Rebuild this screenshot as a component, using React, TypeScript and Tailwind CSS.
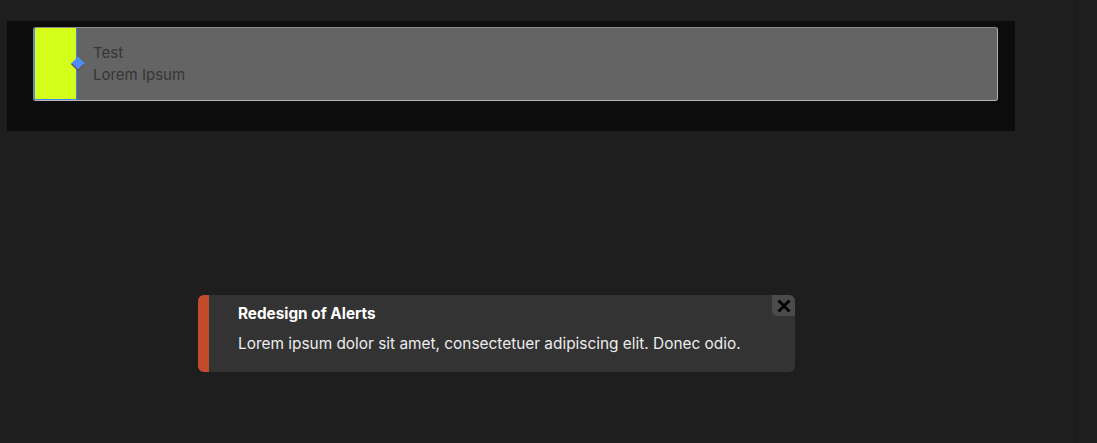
import React from "react";

export default function App() {
  return (
    <div
      className="w-[1097px] h-[443px] bg-[#1f1e1f] flex flex-col overflow-hidden relative"
      style={{ fontFamily: "Inter, 'Noto Sans', sans-serif" }}
    >
      <div className="absolute top-0 bottom-0 left-[1076px] w-px bg-[#1a191a]" />
      <div className="ml-[7px] mt-[21px] w-[1008px] h-[110px] bg-[#0c0c0c] pt-[6px] pl-[26px]">
        <div className="w-[965px] h-[74px] flex rounded-[3px] border border-[#8a8a8a] border-r-[#b0b0b0] border-b-[#b4b4b4] bg-[#646464] relative">
          <div className="w-[43px] h-full bg-[#d4ff1a] border-l border-b border-[#3f8cf0] rounded-l-[2px] border-r border-r-[#3b7fd8] relative">
            <div className="absolute right-[-6.5px] top-[30.5px] w-[10px] h-[10px] rotate-45 bg-[#4b8dff] border border-[#6a4a1a] border-l-[#4b8dff] border-t-[#4b8dff]" />
          </div>
          <div className="flex flex-col pl-[16px] pt-[14px] text-[#363636] text-[15px] leading-[22px]">
            <span>Test</span>
            <span>Lorem Ipsum</span>
          </div>
        </div>
      </div>
      <div className="ml-[198px] mt-[164px] w-[597px] h-[77px] flex rounded-[6px] overflow-hidden bg-[#333333] relative">
        <div className="w-[12px] h-full bg-[#c44a2c] border-r border-[#1f3a3a]" />
        <div className="flex flex-col pl-[28px] pt-[9px]">
          <span className="text-white font-bold text-[15.3px] leading-[20px]">Redesign of Alerts</span>
          <span className="text-[#ececec] text-[15.4px] leading-[20px] mt-[10px]">
            Lorem ipsum dolor sit amet, consectetuer adipiscing elit. Donec odio.
          </span>
        </div>
        <button className="absolute top-0 right-0 w-[23px] h-[21px] bg-[#4b4b4b] rounded-bl-[5px] flex items-center justify-center">
          <svg width="14" height="14" viewBox="0 0 14 14">
            <path d="M2.5 2.5 L11.5 11.5 M11.5 2.5 L2.5 11.5" stroke="#000" strokeWidth="2.8" strokeLinecap="square" />
          </svg>
        </button>
      </div>
    </div>
  );
}
